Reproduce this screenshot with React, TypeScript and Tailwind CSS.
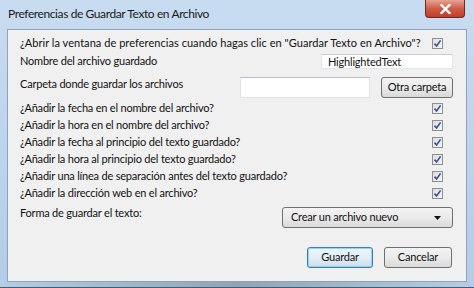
import React from "react";

const font = { fontFamily: 'Lato, "Noto Sans", sans-serif' };

function Check() {
  return (
    <div className="w-[11px] h-[11px] shrink-0 mr-[10px] border border-[#8f8f8f] bg-gradient-to-br from-[#d9dde3] to-[#f7f8fa] flex items-center justify-center">
      <svg width="9" height="9" viewBox="0 0 9 9">
        <path d="M1.5 4.6 L3.6 7 L7.6 1.4" fill="none" stroke="#3b4f8f" strokeWidth="1.6" />
      </svg>
    </div>
  );
}

const checkRows = [
  "¿Añadir la fecha en el nombre del archivo?",
  "¿Añadir la hora en el nombre del archivo?",
  "¿Añadir la fecha al principio del texto guardado?",
  "¿Añadir la hora al principio del texto guardado?",
  "¿Añadir una línea de separación antes del texto guardado?",
  "¿Añadir la dirección web en el archivo?",
];

const grayBtn =
  "rounded-[3px] border border-[#707070] bg-gradient-to-b from-[#f3f3f3] via-[#ebebeb] to-[#d9d9d9] flex items-center";

export default function App() {
  return (
    <div
      className="w-[474px] h-[288px] flex flex-col bg-gradient-to-b from-[#c8dcf1] via-[#bdd4ed] to-[#b3cce8] text-[11px] tracking-[-0.2px] text-[#111]"
      style={font}
    >
      {/* title bar */}
      <div className="h-[29px] shrink-0 flex items-start justify-between pl-[8px] pr-[9px]">
        <span className="mt-[6px] leading-[16px] text-[12px] tracking-[-0.4px] text-[#1a1a1a]">
          Preferencias de Guardar Texto en Archivo
        </span>
        <div className="w-[40px] h-[18px] rounded-b-[4px] border border-t-0 border-[#6e2a22] bg-gradient-to-b from-[#e7a293] via-[#cf5b47] to-[#c13e2b] flex items-center justify-center">
          <svg width="11" height="10" viewBox="0 0 11 10">
            <path d="M1.5 1 L9.5 9 M9.5 1 L1.5 9" stroke="#fff" strokeWidth="2.4" strokeLinecap="square" />
          </svg>
        </div>
      </div>

      {/* dialog body */}
      <div className="mx-[7px] h-[253px] shrink-0 border border-[#8fa2b8] bg-[#f0f0f0] flex flex-col pl-[12px] pr-[13px] pt-[5px]">
        <div className="h-[17px] flex items-center justify-between">
          <span className="whitespace-nowrap tracking-[0.05px]">
            ¿Abrir la ventana de preferencias cuando hagas clic en "Guardar Texto en Archivo"?
          </span>
          <Check />
        </div>
        <div className="h-[18px] flex items-center justify-between">
          <span>Nombre del archivo guardado</span>
          <div className="w-[132px] h-[15px] bg-white border border-[#e2e6ea] border-t-[#c9ccd1] flex items-center pl-[6px] leading-none">
            HighlightedText
          </div>
        </div>
        <div className="h-[30px] flex items-start justify-between">
          <span className="mt-[5px] leading-[17px]">Carpeta donde guardar los archivos</span>
          <div className="mt-[7px] flex gap-[11px]">
            <div className="w-[130px] h-[21px] bg-white border border-[#dfe3e8] border-t-[#b9bdc3]" />
            <div className={`w-[72px] h-[21px] justify-center whitespace-nowrap ${grayBtn}`}>Otra carpeta</div>
          </div>
        </div>
        {checkRows.map((t, i) => (
          <div key={i} className="h-[17px] flex items-center justify-between">
            <span>{t}</span>
            <Check />
          </div>
        ))}
        <div className="h-[28px] flex items-start justify-between">
          <span className="mt-[2px] leading-[17px]">Forma de guardar el texto:</span>
          <div className={`mt-[5px] w-[171px] h-[21px] justify-between pl-[8px] pr-[11px] ${grayBtn}`}>
            <span>Crear un archivo nuevo</span>
            <svg width="7" height="4" viewBox="0 0 7 4">
              <path d="M0 0 H7 L3.5 4 Z" fill="#111" />
            </svg>
          </div>
        </div>
        <div className="mt-[17px] flex justify-end gap-[11px] pr-px">
          <div className="w-[66px] h-[21px] rounded-[3px] border border-[#3c7fb1] bg-gradient-to-b from-[#eaf6fd] via-[#e3eef6] to-[#cfdde8] shadow-[inset_0_0_0_1px_#97d1f1] flex items-center justify-center">
            Guardar
          </div>
          <div className={`w-[68px] h-[21px] justify-center ${grayBtn}`}>Cancelar</div>
        </div>
      </div>

      {/* bottom frame edge */}
      <div className="flex-1 border-b border-[#4a5a6a] bg-gradient-to-r from-[#b5cde8] via-[#8fa5b5] to-[#b5cde8]" />
    </div>
  );
}
